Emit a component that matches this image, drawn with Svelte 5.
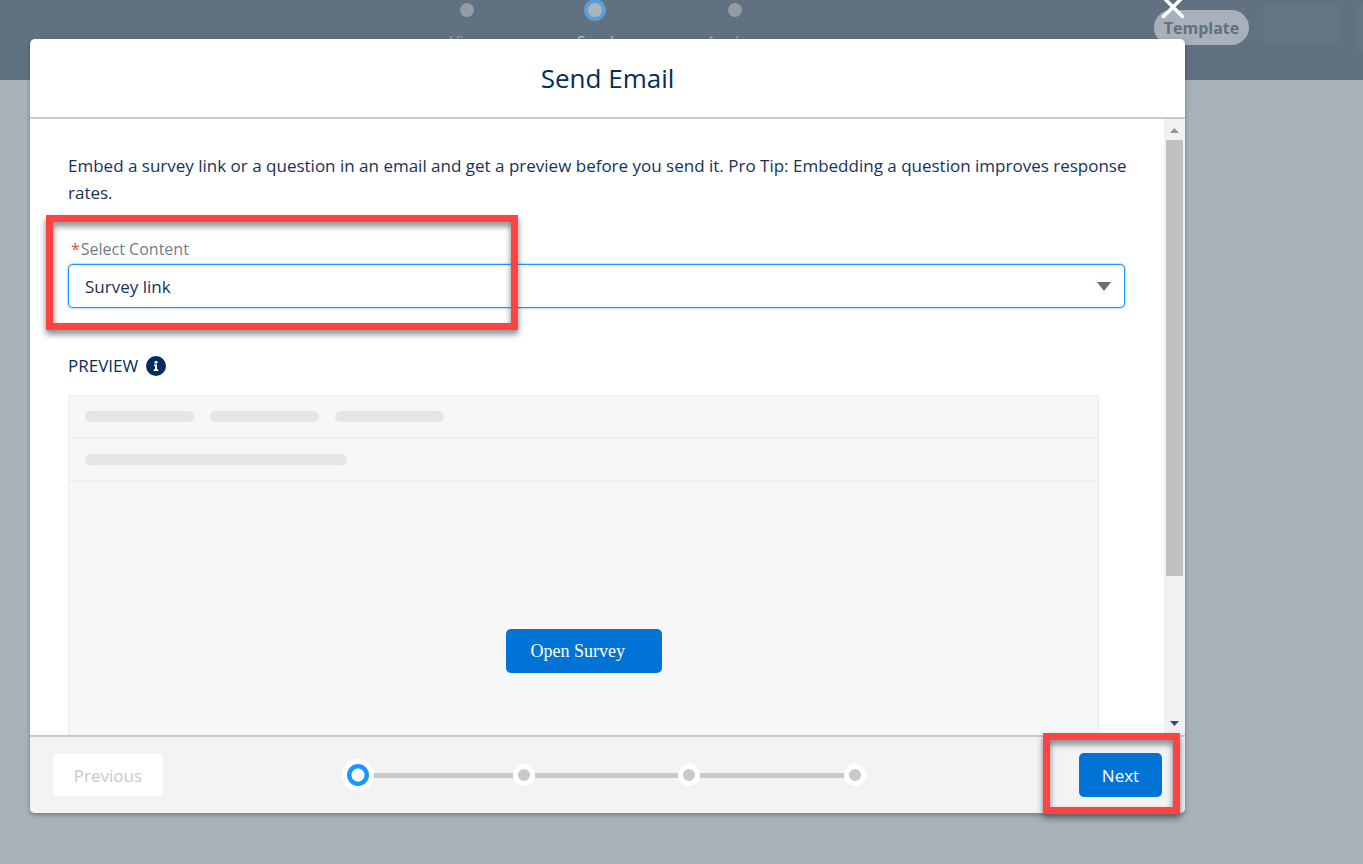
<script>
  let content = $state('Survey link');
  const pages = ['Content', 'Recipients', 'Message', 'Review'];
  let page = $state(0);
</script>

<div class="app">
  <header class="topbar">
    <nav class="stages">
      <a class="stage" href="#view"><i class="pip"></i>View</a>
      <a class="stage current" href="#send"><i class="pip"></i>Send</a>
      <a class="stage" href="#analyze"><i class="pip"></i>Analyze</a>
    </nav>
    <div class="actions">
      <span class="pill">Template</span>
      <button class="ghost" type="button" disabled>Save</button>
      <button class="ghost more" type="button" aria-label="More" disabled></button>
    </div>
  </header>

  <div class="overlay">
    <section class="modal" role="dialog" aria-labelledby="title">
      <button class="close" type="button" aria-label="Close">
        <svg viewBox="0 0 24 24" width="24" height="24"><path d="M2.500 2.500 L21.500 21.500 M21.500 2.500 L2.500 21.500" stroke="#fff" stroke-width="3.500" stroke-linecap="round" /></svg>
      </button>
      <header class="modal-head"><h1 id="title">Send Email</h1></header>

      <div class="body">
        <div class="content">
          <p class="intro">Embed a survey link or a question in an email and get a preview before you send it. Pro Tip: Embedding a question improves response rates.</p>
          <div class="field">
            <label for="content"><span class="star">*</span>Select Content</label>
            <div class="select-wrap">
              <select id="content" bind:value={content}>
                <option>Survey link</option>
                <option>Question</option>
              </select>
              <svg class="caret" viewBox="0 0 14 9" width="14" height="9"><path d="M0 0h14L7 9z" fill="#626e7d" /></svg>
            </div>
            <div class="highlight mark-field"></div>
          </div>

          <h2>PREVIEW
            <svg viewBox="0 0 20 20" width="20" height="20"><circle cx="10" cy="10" r="10" fill="#052c62" /><circle cx="10" cy="6.200" r="1.500" fill="#fff" /><path d="M8 8.500h3v4.800h1.200V15H7.800v-1.700H9V10H8z" fill="#fff" /></svg>
          </h2>
          <div class="preview">
            <div class="line"><i class="bar"></i><i class="bar"></i><i class="bar"></i></div>
            <div class="line"><i class="bar long"></i></div>
            <div class="mail"><button class="open" type="button">Open Survey</button></div>
          </div>
        </div>
        <div class="scrollbar" aria-hidden="true">
          <svg viewBox="0 0 21 21" width="21" height="21"><path d="M6 14h9l-4.500-5z" fill="#9297a0" /></svg>
          <div class="track"><div class="thumb"></div></div>
          <svg viewBox="0 0 21 21" width="21" height="21"><path d="M6 7h9l-4.500 5z" fill="#4c4162" /></svg>
        </div>
      </div>

      <footer class="foot">
        <button class="prev" type="button" disabled>Previous</button>
        <div class="progress">
          {#each pages as name, i}
            {#if i > 0}<span class="rail"></span>{/if}
            <button class="dot" class:active={i === page} type="button" aria-label={name} onclick={() => (page = i)}></button>
          {/each}
        </div>
        <button class="next" type="button">Next</button>
        <div class="highlight mark-next"></div>
      </footer>
    </section>
  </div>
</div>

<style>
  :global(body) { margin: 0; }
  * { box-sizing: border-box; }
  .app {
    position: relative;
    min-height: 100vh;
    overflow: hidden;
    background: #a8b0ba;
    font-family: "Open Sans", "Noto Sans", sans-serif;
    font-size: 17px;
    color: #16325c;
  }
  button { font: inherit; border: 0; padding: 0; margin: 0; }
  .topbar {
    display: flex;
    justify-content: space-between;
    height: 80px;
    background: #607181;
    overflow: hidden;
  }
  .stages { display: flex; gap: 92px; padding-left: 33%; height: 60px; }
  .stage {
    display: flex;
    flex-direction: column;
    align-items: center;
    gap: 13px;
    color: #99a0a7;
    font-size: 16px;
    line-height: 24px;
    text-decoration: none;
  }
  .pip { width: 14px; height: 14px; margin-top: 3px; border-radius: 50%; background: #939ba3; flex: none; }
  .current { color: #b7bec6; gap: 9px; }
  .current .pip { width: 22px; height: 22px; margin-top: -1px; border: 4px solid #5a9fd9; background: #adb4bc; }
  .actions { display: flex; align-items: flex-start; margin-right: -24px; gap: 14px; }
  .pill {
    margin-top: 10px;
    width: 95px;
    line-height: 36px;
    height: 35px;
    border-radius: 18px;
    background: #a8b0ba;
    color: #607181;
    font-weight: 700;
    font-size: 16px;
    text-align: center;
  }
  .ghost { margin-top: 4px; width: 78px; height: 41px; border-radius: 5px; background: #647484; color: #697886; font-size: 16px; }
  .more { width: 32px; height: 46px; }

  .overlay { position: absolute; inset: 0; padding: 39px 178px 51px 30px; }
  .modal {
    position: relative;
    display: flex;
    flex-direction: column;
    height: 100%;
    border-radius: 5px;
    background: #fff;
    box-shadow: 0 2px 4px rgba(0, 0, 0, 0.3);
  }
  .close { position: absolute; top: -44px; right: 0; width: 24px; height: 24px; background: none; cursor: pointer; }
  .close svg { display: block; }
  .modal-head { flex: none; height: 80px; border-bottom: 2px solid #c9c9c9; text-align: center; }
  h1 { margin: 0; font-size: 26px; font-weight: 400; line-height: 78px; color: #032d60; }

  .body { flex: 1; min-height: 0; display: flex; }
  .content { flex: 1; min-width: 0; padding: 33px 39px 0 38px; overflow-y: auto; scrollbar-width: none; }
  .intro { margin: 0 -16px 0 0; line-height: 27px; }
  .field { position: relative; margin-top: 30px; }
  label { display: block; padding-left: 3px; line-height: 26px; font-size: 16px; color: #747b88; }
  .star { margin-right: 1px; color: #e0532c; }
  .select-wrap { display: flex; align-items: center; position: relative; margin-top: 2px; }
  select {
    appearance: none;
    width: 100%;
    height: 44px;
    padding: 0 48px 0 16px;
    border: 1px solid #1b96ff;
    border-radius: 5px;
    background: #fff;
    box-shadow: 0 0 2px #1b96ff;
    font: inherit;
    color: #16325c;
    outline: 0;
  }
  .caret { position: absolute; right: 14px; pointer-events: none; }
  .highlight {
    position: absolute;
    border: 7px solid #ff4343;
    pointer-events: none;
    filter: drop-shadow(0 4px 3px rgba(50, 60, 70, 0.65));
  }
  .mark-field { top: -21px; left: -22px; width: 472px; height: 115px; }
  .mark-next { top: -4px; right: 5px; width: 137px; height: 81px; }

  h2 { display: flex; align-items: center; gap: 8px; margin: 44px 0 15px; font-size: 17px; font-weight: 400; line-height: 28px; color: #032d60; }
  .preview { margin-right: 26px; border: 1px solid #eee; background: #f7f7f7; }
  .line { display: flex; align-items: center; gap: 16px; height: 43px; padding-left: 16px; border-bottom: 2px solid #f0f0f0; }
  .bar { width: 109px; height: 11px; border-radius: 6px; background: #e5e5e5; }
  .long { width: 262px; }
  .mail { display: flex; justify-content: center; align-items: center; height: 338px; }
  .open {
    width: 156px;
    height: 44px;
    padding-left: 25px;
    border-radius: 5px;
    background: #0074d6;
    color: #fff;
    font-family: "Liberation Serif", serif;
    font-size: 18px;
    text-align: left;
  }
  .scrollbar { flex: none; display: flex; flex-direction: column; width: 21px; background: #f1f1f1; }
  .track { flex: 1; padding: 0 2px; }
  .thumb { height: 76%; background: #c1c1c1; }

  .foot {
    position: relative;
    flex: none;
    display: flex;
    align-items: center;
    justify-content: space-between;
    height: 78px;
    padding: 0 23px;
    border-top: 2px solid #c9c9c9;
    border-radius: 0 0 5px 5px;
    background: #f3f3f3;
  }
  .prev { width: 110px; height: 42px; border-radius: 5px; background: #fff; color: #c9c9c9; }
  .next { width: 83px; height: 44px; border-radius: 5px; background: #0074d6; color: #fff; }
  .progress { display: flex; align-items: center; width: 524px; margin-right: 34px; }
  .rail { flex: 1; height: 5px; background: #c9c9c9; }
  .dot { flex: none; width: 22px; height: 22px; border: 5px solid #fff; border-radius: 50%; background: #c9c9c9; cursor: pointer; }
  .active { position: relative; width: 32px; height: 32px; margin-right: -5px; background: radial-gradient(circle, #fff 6px, #1b96ff 7px); }
</style>
